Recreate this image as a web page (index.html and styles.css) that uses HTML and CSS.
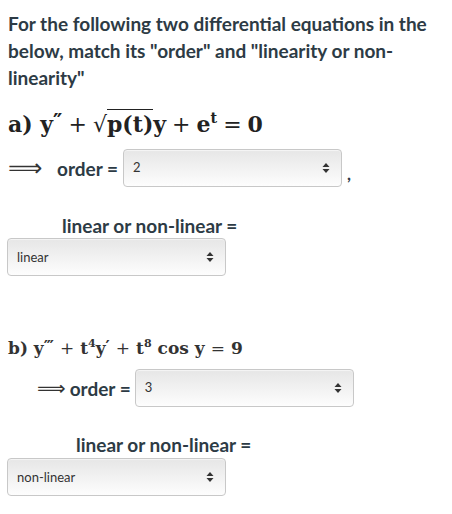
FILE: index.html
```html
<!DOCTYPE html>
<html lang="en">
  <head>
    <meta charset="UTF-8" />
    <title>Question</title>
    <link rel="stylesheet" href="styles.css">
  </head>
  <body>
    <div class="question">
      <p class="intro">For the following two differential equations in the below, match its "order" and "linearity or non-linearity"</p>

      <div class="eq eq-a">a) y<span class="pr">″</span><span class="op">+</span><span class="root"><span class="rad">√</span><span class="under">p(t)</span></span>y<span class="op">+</span>e<sup>t</sup><span class="op">=</span>0</div>

      <div class="row order-a">
        <span class="arrow">⟹</span>
        <span class="label">order =</span>
        <div class="select select-order">
          <span>2</span>
          <svg width="8" height="12" viewBox="0 0 8 12"><path d="M4 1 L7.5 5 L0.5 5 Z M4 11 L7.5 7 L0.5 7 Z" fill="#333"/></svg>
        </div>
        <span class="comma">,</span>
      </div>

      <div class="label lin lin-a">linear or non-linear =</div>
      <div class="select select-lin">
        <span>linear</span>
        <svg width="8" height="12" viewBox="0 0 8 12"><path d="M4 1 L7.5 5 L0.5 5 Z M4 11 L7.5 7 L0.5 7 Z" fill="#333"/></svg>
      </div>

      <div class="eq eq-b">b) y<span class="pr">‴</span><span class="op">+</span>t<sup>4</sup>y<span class="pr">′</span><span class="op">+</span>t<sup>8</sup> cos y<span class="op">=</span>9</div>

      <div class="row order-b">
        <span class="arrow small">⟹</span>
        <span class="label">order =</span>
        <div class="select select-order">
          <span>3</span>
          <svg width="8" height="12" viewBox="0 0 8 12"><path d="M4 1 L7.5 5 L0.5 5 Z M4 11 L7.5 7 L0.5 7 Z" fill="#333"/></svg>
        </div>
      </div>

      <div class="label lin lin-b">linear or non-linear =</div>
      <div class="select select-lin">
        <span>non-linear</span>
        <svg width="8" height="12" viewBox="0 0 8 12"><path d="M4 1 L7.5 5 L0.5 5 Z M4 11 L7.5 7 L0.5 7 Z" fill="#333"/></svg>
      </div>
    </div>
  </body>
</html>
```

FILE: styles.css
```css
* {
  margin: 0;
  padding: 0;
  box-sizing: border-box;
}
body {
  background: #fff;
  font-family: Lato, "Open Sans", sans-serif;
  color: #2d3b45;
}
.question {
  padding: 10px 8px 0 8px;
}
.intro {
  font-size: 19px;
  font-weight: 700;
  line-height: 27px;
}

/* equations */
.eq {
  font-family: "DejaVu Serif", "Liberation Serif", serif;
  font-weight: 700;
  color: #222;
  white-space: nowrap;
}
.eq sup {
  font-size: 65%;
  vertical-align: 0.6em;
  line-height: 0;
}
.eq .pr {
  font-family: "DejaVu Sans", sans-serif;
  font-weight: 700;
  font-size: 95%;
  vertical-align: 0.15em;
  line-height: 0;
}
.eq .op {
  font-weight: 400;
  margin: 0 6px;
}
.eq-a {
  font-size: 22px;
  margin-top: 20px;
  height: 30px;
}
.root .rad {
  font-weight: 400;
}
.root .under {
  border-top: 1.5px solid #222;
  padding-top: 1px;
}
.eq-b {
  font-size: 17px;
  color: #333;
  margin-top: 62px;
}

/* rows */
.row {
  display: flex;
  align-items: center;
}
.label {
  font-size: 19px;
  font-weight: 700;
}
.arrow {
  font-family: "DejaVu Sans", sans-serif;
  font-size: 24px;
  color: #333;
  width: 49px;
}
.arrow.small {
  font-size: 20px;
  width: auto;
  margin-right: 4px;
}
.order-a {
  margin-top: 8px;
}
.order-a .label {
  margin-right: 5px;
}
.comma {
  font-weight: 700;
  font-size: 17px;
  margin: 10px 0 0 5px;
}
.order-b {
  margin-top: 11px;
  padding-left: 29px;
}
.order-b .label {
  margin-right: 4px;
}

.lin {
  line-height: 20px;
}
.lin-a {
  margin: 29px 0 2px 54px;
}
.lin-b {
  margin: 28px 0 3px 68px;
}

/* fake selects */
.select {
  display: flex;
  align-items: center;
  justify-content: space-between;
  height: 38px;
  border: 1px solid #c8c8c8;
  border-radius: 4px;
  background: linear-gradient(#e6e6e6, #fdfdfd);
  box-shadow: inset 0 1px 1px rgba(255, 255, 255, .6);
  font-size: 13px;
  color: #333;
  padding: 0 11px 0 9px;
}
.select-order {
  width: 219px;
}
.select-order span {
  margin-top: -3px;
}
.select-lin {
  width: 219px;
  margin-left: -1px;
}
```
